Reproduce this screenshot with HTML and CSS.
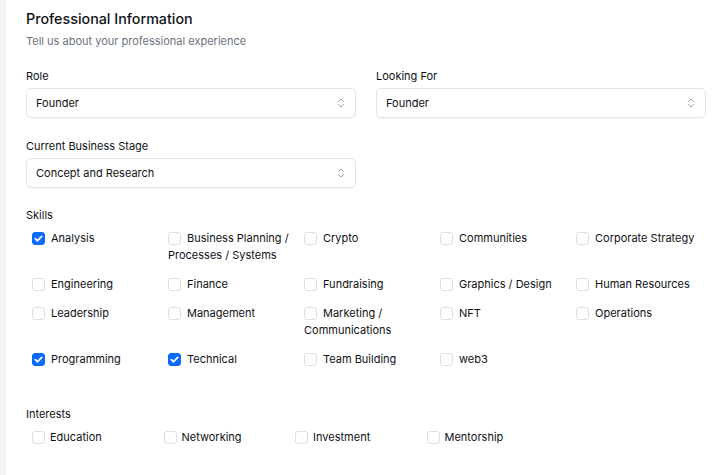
FILE: index.html
```html
<!DOCTYPE html>
<html lang="en">
<head>
  <meta charset="UTF-8">
  <meta name="viewport" content="width=device-width, initial-scale=1.0">
  <title>Professional Information</title>
  <link rel="stylesheet" href="styles.css">
</head>
<body>
  <div class="rail"></div>
  <main class="panel">
    <h2 class="title">Professional Information</h2>
    <p class="subtitle">Tell us about your professional experience</p>

    <div class="row">
      <div class="field">
        <label class="label" for="role">Role</label>
        <div class="select">
          <select id="role">
            <option>Founder</option>
            <option>Co-Founder</option>
            <option>Investor</option>
          </select>
          <svg class="chevrons" width="8" height="12" viewBox="0 0 8 12"><path d="M1.5 4.5 4 2l2.5 2.5M1.5 7.5 4 10l2.5-2.5" fill="none" stroke="#9ca3af" stroke-width="1" stroke-linecap="round" stroke-linejoin="round"/></svg>
        </div>
      </div>
      <div class="field">
        <label class="label" for="looking">Looking For</label>
        <div class="select">
          <select id="looking">
            <option>Founder</option>
            <option>Co-Founder</option>
            <option>Investor</option>
          </select>
          <svg class="chevrons" width="8" height="12" viewBox="0 0 8 12"><path d="M1.5 4.5 4 2l2.5 2.5M1.5 7.5 4 10l2.5-2.5" fill="none" stroke="#9ca3af" stroke-width="1" stroke-linecap="round" stroke-linejoin="round"/></svg>
        </div>
      </div>
    </div>

    <div class="row">
      <div class="field">
        <label class="label" for="stage">Current Business Stage</label>
        <div class="select">
          <select id="stage">
            <option>Concept and Research</option>
            <option>MVP</option>
            <option>Growth</option>
          </select>
          <svg class="chevrons" width="8" height="12" viewBox="0 0 8 12"><path d="M1.5 4.5 4 2l2.5 2.5M1.5 7.5 4 10l2.5-2.5" fill="none" stroke="#9ca3af" stroke-width="1" stroke-linecap="round" stroke-linejoin="round"/></svg>
        </div>
      </div>
    </div>

    <div class="group">
      <div class="label">Skills</div>
      <div class="checks skills">
        <label class="check"><input type="checkbox" checked>Analysis</label>
        <label class="check"><input type="checkbox">Business Planning / Processes / Systems</label>
        <label class="check"><input type="checkbox">Crypto</label>
        <label class="check"><input type="checkbox">Communities</label>
        <label class="check"><input type="checkbox">Corporate Strategy</label>
        <label class="check"><input type="checkbox">Engineering</label>
        <label class="check"><input type="checkbox">Finance</label>
        <label class="check"><input type="checkbox">Fundraising</label>
        <label class="check"><input type="checkbox">Graphics / Design</label>
        <label class="check"><input type="checkbox">Human Resources</label>
        <label class="check"><input type="checkbox">Leadership</label>
        <label class="check"><input type="checkbox">Management</label>
        <label class="check"><input type="checkbox">Marketing / Communications</label>
        <label class="check"><input type="checkbox">NFT</label>
        <label class="check"><input type="checkbox">Operations</label>
        <label class="check"><input type="checkbox" checked>Programming</label>
        <label class="check"><input type="checkbox" checked>Technical</label>
        <label class="check"><input type="checkbox">Team Building</label>
        <label class="check"><input type="checkbox">web3</label>
      </div>
    </div>

    <div class="group interests-group">
      <div class="label">Interests</div>
      <div class="checks interests">
        <label class="check"><input type="checkbox">Education</label>
        <label class="check"><input type="checkbox">Networking</label>
        <label class="check"><input type="checkbox">Investment</label>
        <label class="check"><input type="checkbox">Mentorship</label>
      </div>
    </div>
  </main>
</body>
</html>
```

FILE: styles.css
```css
body {
  margin: 0;
  display: flex;
  min-height: 475px;
  font-family: Inter, "Noto Sans", sans-serif;
  color: #0f1115;
  background: #fff;
}

.rail {
  width: 6px;
  flex-shrink: 0;
  background: #f3f4f6;
}

.panel {
  flex: 1;
  padding: 9px 14px 0 20px;
}

.title {
  margin: 0;
  font-size: 14.3px;
  font-weight: 500;
  line-height: 20px;
}

.subtitle {
  margin: 3px 0 0;
  font-size: 11px;
  line-height: 18px;
  color: #6b7280;
}

.row {
  display: flex;
  gap: 20px;
  margin-top: 18px;
}

.row + .row {
  margin-top: 20px;
}

.field {
  width: 330px;
}

.label {
  display: block;
  font-size: 11px;
  line-height: 16px;
  margin-bottom: 4px;
}

.select {
  position: relative;
}

.select select {
  appearance: none;
  width: 100%;
  height: 30px;
  padding: 0 24px 0 9px;
  border: 1px solid #e2e4e8;
  border-radius: 5px;
  background: #fff;
  font-family: inherit;
  font-size: 11px;
  color: #0f1115;
  box-shadow: 0 1px 1px rgba(0, 0, 0, 0.03);
}

.chevrons {
  position: absolute;
  right: 11px;
  top: 9px;
  pointer-events: none;
}

.group {
  margin-top: 19px;
}

.group .label {
  margin-bottom: 7px;
}

.checks {
  display: grid;
  row-gap: 12px;
  padding-left: 6px;
  font-size: 11px;
  line-height: 17px;
}

.skills {
  grid-template-columns: repeat(5, 136px);
}

.interests {
  grid-template-columns: repeat(4, 131.5px);
}

.interests-group {
  margin-top: 38px;
}

.interests .check input {
  margin-right: 5px;
}

.check {
  padding-right: 8px;
}

.check input {
  appearance: none;
  width: 13px;
  height: 13px;
  margin: 0 6px 0 0;
  vertical-align: -3px;
  border: 1px solid #dcdfe4;
  border-radius: 3px;
  background: #fff;
}

.check input:checked {
  border-color: #0b6bff;
  background: #0b6bff url("data:image/svg+xml,%3Csvg xmlns='http://www.w3.org/2000/svg' viewBox='0 0 13 13'%3E%3Cpath d='M3.3 6.7 5.4 8.8 9.7 4.4' fill='none' stroke='white' stroke-width='1.7' stroke-linecap='round' stroke-linejoin='round'/%3E%3C/svg%3E") center / 13px 13px no-repeat;
}
```
